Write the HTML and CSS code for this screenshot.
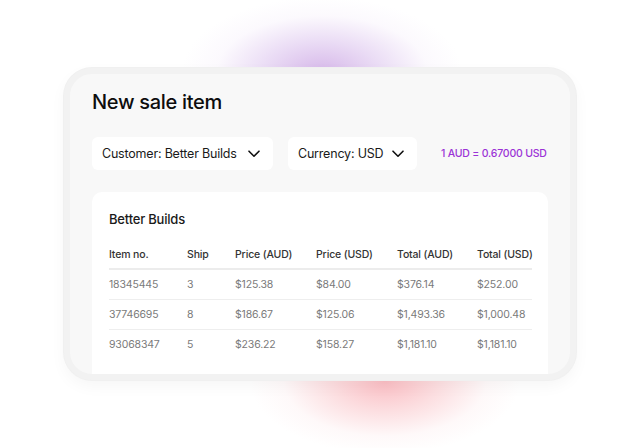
FILE: index.html
```html
<!DOCTYPE html>
<html>
<head>
<meta charset="utf-8">
<link rel="stylesheet" href="styles.css">
</head>
<body>
<div class="stage">
  <div class="panel">
    <div class="panel-inner">
      <h1 class="title">New sale item</h1>
      <div class="controls">
        <div class="select select-customer">
          <span>Customer: Better Builds</span>
          <svg class="chev" width="12" height="8" viewBox="0 0 12 8"><path d="M1 1.2 L6 6.2 L11 1.2" fill="none" stroke="#111" stroke-width="1.6" stroke-linecap="round" stroke-linejoin="round"/></svg>
        </div>
        <div class="select select-currency">
          <span>Currency: USD</span>
          <svg class="chev" width="12" height="8" viewBox="0 0 12 8"><path d="M1 1.2 L6 6.2 L11 1.2" fill="none" stroke="#111" stroke-width="1.6" stroke-linecap="round" stroke-linejoin="round"/></svg>
        </div>
        <div class="rate">1 AUD = 0.67000 USD</div>
      </div>
      <div class="card">
        <div class="card-title">Better Builds</div>
        <table class="items">
          <colgroup>
            <col class="c1"><col class="c2"><col class="c3"><col class="c4"><col class="c5"><col class="c6">
          </colgroup>
          <thead>
            <tr><th>Item no.</th><th>Ship</th><th>Price (AUD)</th><th>Price (USD)</th><th>Total (AUD)</th><th>Total (USD)</th></tr>
          </thead>
          <tbody>
            <tr><td>18345445</td><td>3</td><td>$125.38</td><td>$84.00</td><td>$376.14</td><td>$252.00</td></tr>
            <tr><td>37746695</td><td>8</td><td>$186.67</td><td>$125.06</td><td>$1,493.36</td><td>$1,000.48</td></tr>
            <tr><td>93068347</td><td>5</td><td>$236.22</td><td>$158.27</td><td>$1,181.10</td><td>$1,181.10</td></tr>
          </tbody>
        </table>
      </div>
    </div>
  </div>
</div>
</body>
</html>
```
FILE: styles.css
```css
html, body {
  margin: 0;
  padding: 0;
}
body {
  width: 640px;
  height: 448px;
  overflow: hidden;
  font-family: Inter, "Liberation Sans", sans-serif;
  background:
    radial-gradient(ellipse 140px 75px at 322px 72px, rgba(212, 180, 232, 0.95) 0%, rgba(220, 196, 238, 0.6) 40%, rgba(242, 232, 249, 0.25) 75%, rgba(255, 255, 255, 0) 100%),
    radial-gradient(ellipse 135px 72px at 385px 382px, rgba(250, 186, 192, 0.95) 0%, rgba(250, 200, 204, 0.6) 40%, rgba(252, 230, 232, 0.25) 75%, rgba(255, 255, 255, 0) 100%),
    #ffffff;
}
.stage {
  padding-top: 68px;
}
.panel {
  width: 500px;
  height: 300px;
  margin: 0 auto;
  border: 6px solid #f2f2f2;
  border-radius: 28px;
  background: #f8f8f8;
  box-shadow: 0 0 0 1px #f0f0f0, 0 6px 16px rgba(0, 0, 0, 0.04);
  overflow: hidden;
}
.panel-inner {
  padding: 16px 22px 0 22px;
}
.title {
  margin: 0;
  font-size: 20px;
  line-height: 24px;
  font-weight: 500;
  color: #0d0d0d;
  letter-spacing: -0.3px;
}
.controls {
  display: flex;
  align-items: center;
  margin-top: 23px;
  gap: 15px;
}
.select {
  display: flex;
  align-items: center;
  justify-content: space-between;
  height: 33px;
  box-sizing: border-box;
  background: #ffffff;
  border-radius: 6px;
  padding: 0 13px 0 10px;
  font-size: 12.5px;
  letter-spacing: -0.2px;
  color: #1a1a1a;
  white-space: nowrap;
}
.select-customer {
  width: 181px;
}
.select-currency {
  width: 129px;
}
.chev {
  display: block;
  flex: none;
}
.rate {
  margin-left: 9px;
  font-size: 10.5px;
  font-weight: 500;
  letter-spacing: -0.2px;
  color: #9b33d6;
  white-space: nowrap;
}
.card {
  margin-top: 22px;
  background: #ffffff;
  border-radius: 10px;
  padding: 19px 16px 40px 17px;
}
.card-title {
  font-size: 13px;
  line-height: 16px;
  font-weight: 500;
  color: #1a1a1a;
  letter-spacing: -0.2px;
}
.items {
  margin-top: 13px;
  width: 423px;
  border-collapse: collapse;
  table-layout: fixed;
  font-size: 10.5px;
  letter-spacing: -0.15px;
}
.c1 { width: 78px; }
.c2 { width: 48px; }
.c3 { width: 81px; }
.c4 { width: 81px; }
.c5 { width: 80px; }
.c6 { width: 55px; }
.items th {
  text-align: left;
  font-weight: 500;
  color: #333333;
  height: 28px;
  padding: 0;
  border-bottom: 2px solid #ececec;
  white-space: nowrap;
}
.items td {
  height: 29px;
  padding: 0;
  color: #7a7a7a;
  border-bottom: 1px solid #eeeeee;
  white-space: nowrap;
}
.items tbody tr:last-child td {
  border-bottom: none;
}
```
